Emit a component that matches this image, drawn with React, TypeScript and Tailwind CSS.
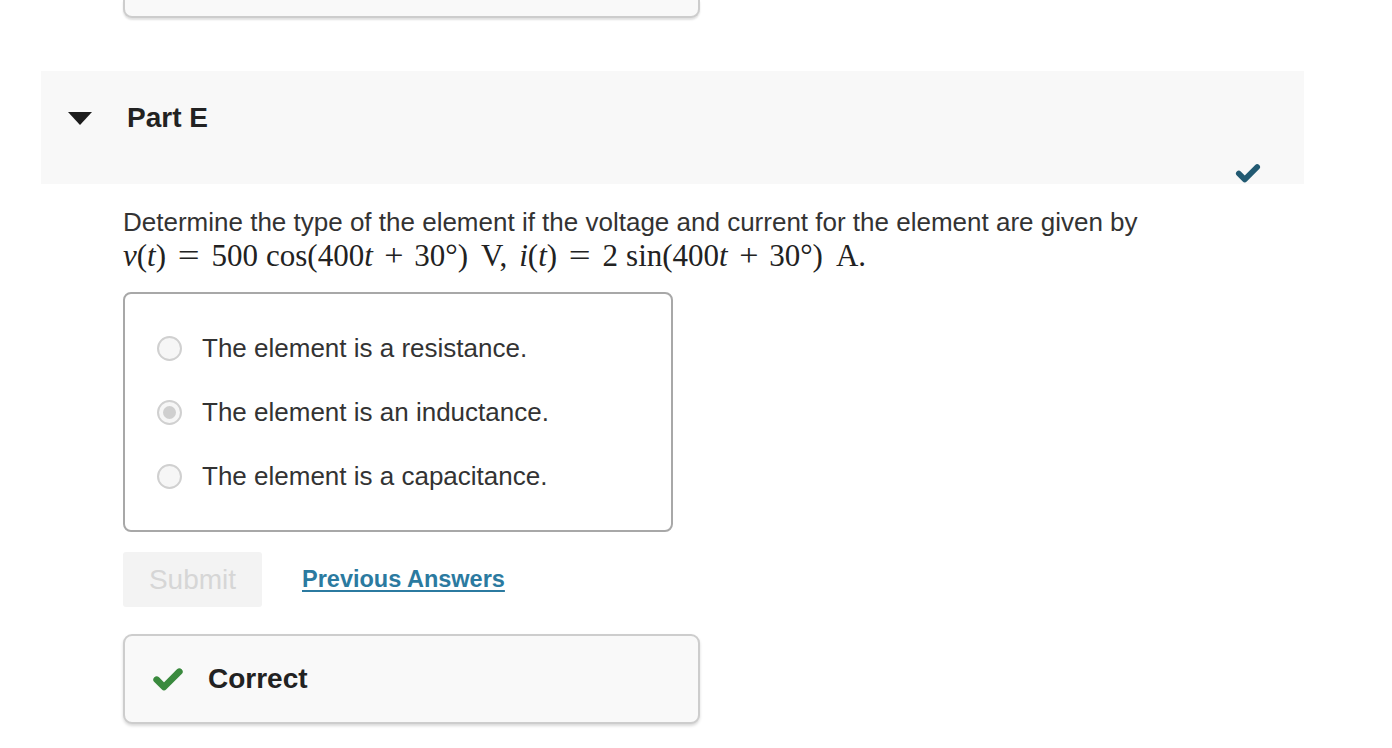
const sans = { fontFamily: '"Liberation Sans", Arial, sans-serif' };

function Check({ className, weight = 4.2 }: { className?: string; weight?: number }) {
  return (
    <svg viewBox="0 0 24 18" className={className} fill="none">
      <path d="M3.5 9.5 L9 15 L20.5 3.5" stroke="currentColor" strokeWidth={weight} strokeLinecap="round" strokeLinejoin="round" />
    </svg>
  );
}

function Radio({ checked }: { checked?: boolean }) {
  return (
    <span className="flex h-[25px] w-[25px] shrink-0 items-center justify-center rounded-full border-2 border-[#d0d0d0] bg-[#f6f6f6]">
      {checked && <span className="h-[13px] w-[13px] rounded-full bg-[#cfcfcf]" />}
    </span>
  );
}

function Rel({ children }: { children: string }) {
  return <span className="mx-[14px] inline-block scale-x-125">{children}</span>;
}

function Bin({ children }: { children: string }) {
  return <span className="mx-[12px] inline-block scale-x-110">{children}</span>;
}

function MathLine() {
  const i = "italic";
  return (
    <p
      className="whitespace-nowrap text-[31px] leading-[34px] text-[#222]"
      style={{ fontFamily: '"Liberation Serif", "Times New Roman", serif' }}
    >
      <span className={i}>v</span>(<span className={i}>t</span>)<Rel>=</Rel>500
      <span className="ml-[8px]">cos</span>(400<span className={i}>t</span>
      <Bin>+</Bin>30°)<span className="ml-[13px]">V</span>,<span className="ml-[12px]" />
      <span className={i}>i</span>(<span className={i}>t</span>)<Rel>=</Rel>2
      <span className="ml-[8px]">sin</span>(400<span className={i}>t</span>
      <Bin>+</Bin>30°)<span className="ml-[13px]">A</span>.
    </p>
  );
}

const options = [
  { label: "The element is a resistance.", checked: false },
  { label: "The element is an inductance.", checked: true },
  { label: "The element is a capacitance.", checked: false },
];

export default function App() {
  return (
    <div className="min-h-[748px] w-[1392px] overflow-hidden bg-white text-[#333]" style={sans}>
      <div className="pl-[123px]">
        <div className="h-[18px] w-[577px] rounded-b-[9px] border-x-2 border-b-2 border-[#cdcdcd] bg-[#f9f9f9] shadow-[0_2px_2px_rgba(0,0,0,0.12)]" />
      </div>

      <div className="ml-[41px] mt-[53px] w-[1263px]">
        <div className="relative h-[113px] bg-[#f8f8f8]">
          <div className="flex items-center pt-[32px]">
            <svg viewBox="0 0 24 13" className="ml-[27px] h-[13px] w-[24px]">
              <polygon points="0,0 24,0 12,13" fill="#1c1c1c" />
            </svg>
            <h2 className="ml-[35px] text-[28px] font-bold leading-[30px] text-[#222]">Part E</h2>
          </div>
          <Check weight={5.2} className="absolute bottom-[1px] right-[43px] h-[20px] w-[26px] text-[#225a72]" />
        </div>

        <div className="pl-[82px] pt-[21px]">
          <p className="text-[26px] leading-[34px] text-[#333]">
            Determine the type of the element if the voltage and current for the element are given by
          </p>
          <MathLine />

          <div className="mt-[19px] w-[550px] rounded-[8px] border-2 border-[#a8a8a8] pb-[22px] pl-[32px] pt-[22px]">
            {options.map((o) => (
              <label key={o.label} className="flex h-[64px] items-center gap-[20px]">
                <Radio checked={o.checked} />
                <span className="text-[26px] text-[#333]">{o.label}</span>
              </label>
            ))}
          </div>

          <div className="mt-[20px] flex items-center">
            <button className="h-[55px] w-[139px] rounded-[3px] bg-[#f3f3f3] text-[28px] text-[#d6d6d6]" disabled>
              Submit
            </button>
            <a className="ml-[40px] text-[23.5px] font-bold text-[#2b7aa0] underline underline-offset-[3px]">
              Previous Answers
            </a>
          </div>

          <div className="mt-[27px] flex h-[90px] w-[577px] items-center rounded-[9px] border-2 border-[#cdcdcd] bg-[#f9f9f9] shadow-[0_2px_3px_rgba(0,0,0,0.15)]">
            <Check weight={5} className="ml-[27px] h-[24px] w-[32px] text-[#3a8a3e]" />
            <span className="ml-[24px] text-[28px] font-bold text-[#222]">Correct</span>
          </div>
        </div>
      </div>
    </div>
  );
}
